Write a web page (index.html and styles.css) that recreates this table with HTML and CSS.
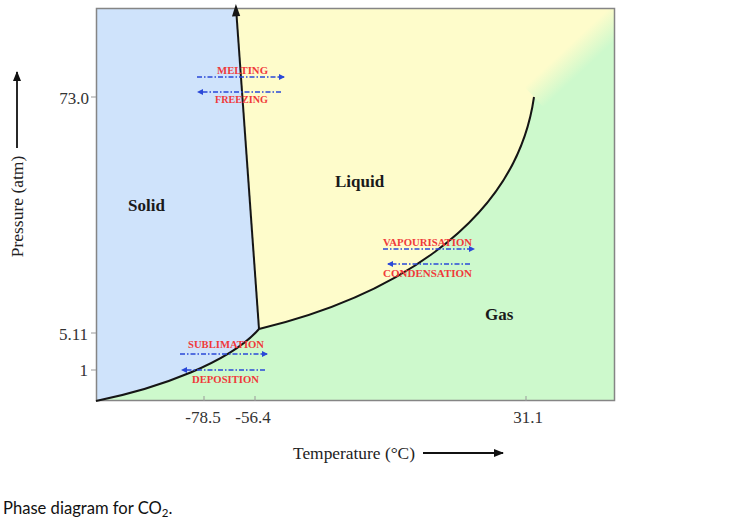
FILE: index.html
```html
<!DOCTYPE html>
<html>
<head>
<meta charset="utf-8">
<link rel="stylesheet" href="styles.css">
</head>
<body>
<div class="figure">
<svg class="diagram" width="742" height="490" viewBox="0 0 742 490" xmlns="http://www.w3.org/2000/svg">
  <defs>
    <clipPath id="box"><rect x="96" y="8" width="519" height="393"/></clipPath>
    <linearGradient id="fade" gradientUnits="userSpaceOnUse" x1="579.5" y1="35.8" x2="598.5" y2="56.2">
      <stop offset="0" stop-color="#fefccb"/>
      <stop offset="1" stop-color="#cdf9cc"/>
    </linearGradient>
    <marker id="hr" viewBox="0 0 6 6" refX="5" refY="3" markerWidth="6" markerHeight="6" markerUnits="userSpaceOnUse" orient="auto">
      <path d="M0,0 L6,3 L0,6 Z" fill="#2a48d8"/>
    </marker>
    <marker id="ah" viewBox="0 0 10 8" refX="9" refY="4" markerWidth="10" markerHeight="8" markerUnits="userSpaceOnUse" orient="auto">
      <path d="M0,0 L10,4 L0,8 Z" fill="#111"/>
    </marker>
  </defs>

  <g clip-path="url(#box)">
    <rect x="96" y="8" width="519" height="393" fill="#cdf9cc"/>
    <path d="M236,8 L615,8 L615,21.5 L534,97 C515,230 380,300 259,329 Z" fill="#fefccb"/>
    <polygon points="524.5,86.8 634.2,-15.4 653.2,5 543.5,107.2" fill="url(#fade)"/>
    <path d="M96,8 L236,8 L259,329 C230,362 160,388 96,401 Z" fill="#cfe3fb"/>
  </g>

  <rect x="96.5" y="8.5" width="518" height="392" fill="none" stroke="#858585" stroke-width="1.5"/>

  <g stroke="#999" stroke-width="1">
    <line x1="91" y1="97" x2="96" y2="97"/>
    <line x1="91" y1="333" x2="96" y2="333"/>
    <line x1="91" y1="370" x2="96" y2="370"/>
    <line x1="204" y1="401" x2="204" y2="396"/>
    <line x1="255" y1="401" x2="255" y2="396"/>
    <line x1="526" y1="401" x2="526" y2="396"/>
  </g>

  <g fill="none" stroke="#151515" stroke-width="2">
    <path d="M259,329 L236.6,16"/>
    <path d="M96,401 C160,388 230,362 259,329"/>
    <path d="M259,329 C380,300 515,230 534,97"/>
  </g>
  <path d="M235.9,4 L240.2,16 L232,16.6 Z" fill="#151515"/>

  <g class="tick">
    <text x="89" y="104" text-anchor="end">73.0</text>
    <text x="88" y="340" text-anchor="end">5.11</text>
    <text x="88" y="376" text-anchor="end">1</text>
    <text x="203" y="423" text-anchor="middle">-78.5</text>
    <text x="253" y="423" text-anchor="middle">-56.4</text>
    <text x="528" y="423" text-anchor="middle">31.1</text>
  </g>

  <g class="phase">
    <text x="128" y="211">Solid</text>
    <text x="335" y="187">Liquid</text>
    <text x="485" y="320">Gas</text>
  </g>

  <g fill="none" stroke="#2a48d8" stroke-width="1.6" stroke-dasharray="5 2 1.5 2">
    <line x1="197" y1="77" x2="284" y2="77" marker-end="url(#hr)"/>
    <line x1="281" y1="92" x2="198" y2="92" marker-end="url(#hr)"/>
    <line x1="383" y1="249" x2="474" y2="249" marker-end="url(#hr)"/>
    <line x1="470" y1="264" x2="388" y2="264" marker-end="url(#hr)"/>
    <line x1="180" y1="354" x2="267" y2="354" marker-end="url(#hr)"/>
    <line x1="265" y1="370" x2="182" y2="370" marker-end="url(#hr)"/>
  </g>

  <g class="process">
    <text x="217" y="73.5" textLength="51" lengthAdjust="spacingAndGlyphs">MELTING</text>
    <text x="215" y="102.5" textLength="53" lengthAdjust="spacingAndGlyphs">FREEZING</text>
    <text x="383" y="245.5" textLength="89" lengthAdjust="spacingAndGlyphs">VAPOURISATION</text>
    <text x="383" y="276.5" textLength="89" lengthAdjust="spacingAndGlyphs">CONDENSATION</text>
    <text x="188" y="347.5" textLength="76" lengthAdjust="spacingAndGlyphs">SUBLIMATION</text>
    <text x="192" y="382.5" textLength="67" lengthAdjust="spacingAndGlyphs">DEPOSITION</text>
  </g>

  <g class="axis">
    <text transform="translate(22.5,206.5) rotate(-90)" text-anchor="middle">Pressure (atm)</text>
    <text x="293" y="459" textLength="122" lengthAdjust="spacingAndGlyphs">Temperature (°C)</text>
  </g>
  <g stroke="#111" stroke-width="1.8">
    <line x1="17" y1="148" x2="17" y2="72" marker-end="url(#ah)"/>
    <line x1="423" y1="453" x2="503" y2="453" marker-end="url(#ah)"/>
  </g>
</svg>
</div>
<p class="caption">Phase diagram for CO<sub>2</sub>.</p>
</body>
</html>
```

FILE: styles.css
```css
html, body {
  margin: 0;
  padding: 0;
  background: #ffffff;
}

.figure {
  display: block;
  line-height: 0;
}

.diagram {
  display: block;
}

.diagram .tick text {
  font-family: "Liberation Serif", "DejaVu Serif", serif;
  font-size: 17px;
  fill: #333333;
}

.diagram .phase text {
  font-family: "Liberation Serif", "DejaVu Serif", serif;
  font-size: 17px;
  font-weight: bold;
  fill: #1a1a1a;
}

.diagram .process text {
  font-family: "Liberation Serif", "DejaVu Serif", serif;
  font-size: 10px;
  font-weight: bold;
  fill: #f03a3a;
}

.diagram .axis text {
  font-family: "Liberation Serif", "DejaVu Serif", serif;
  font-size: 17.5px;
  fill: #222222;
}

.caption {
  margin: 8px 0 0 3px;
  font-family: Lato, "Open Sans", "Liberation Sans", sans-serif;
  font-size: 16.6px;
  line-height: 20px;
  color: #111111;
}

.caption sub {
  font-size: 11.5px;
  vertical-align: -3px;
  line-height: 0;
}
```
